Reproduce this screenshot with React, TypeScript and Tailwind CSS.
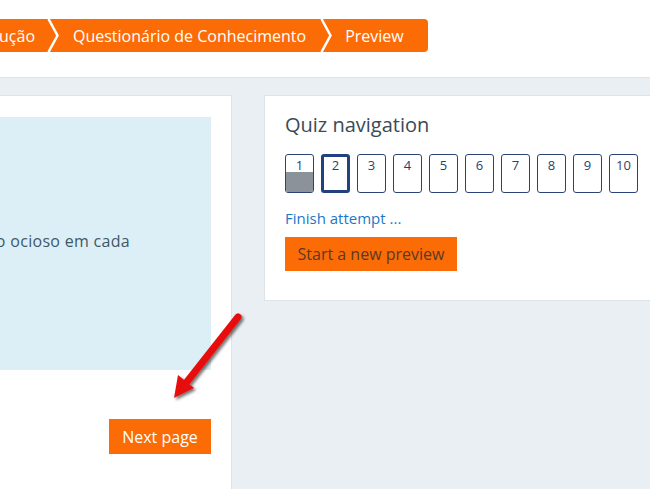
import React from 'react'

const font = { fontFamily: '"Open Sans", "Noto Sans", sans-serif' }

function Chevron() {
  return (
    <svg width="13" height="33" viewBox="0 0 13 33" className="shrink-0">
      <polyline points="1.5,0 10.5,16.5 1.5,33" fill="none" stroke="#fff" strokeWidth="2.5" />
    </svg>
  )
}

function NavButton({ n, current, answered }: { n: number; current?: boolean; answered?: boolean }) {
  return (
    <div
      className={`relative w-[29px] h-[39px] rounded-[3px] bg-white overflow-hidden flex justify-center ${
        current ? 'border-[3px] border-[#22417f]' : 'border border-[#2b4478]'
      }`}
    >
      {answered && <div className="absolute left-0 right-0 bottom-0 h-[20px] bg-[#8b9299]" />}
      <span className={`relative text-[13px] leading-none text-[#2b3f6e] ${current ? 'mt-[2px]' : 'mt-[4px]'}`}>{n}</span>
    </div>
  )
}

export default function App() {
  return (
    <div className="relative w-[650px] h-[489px] overflow-hidden bg-[#e9eff3]" style={font}>
      {/* Header with breadcrumb */}
      <div className="h-[78px] bg-white border-b border-[#dbe3e8] pt-[19px]">
        <div className="flex items-center h-[33px] w-[428px] bg-[#fb6b06] rounded-r-[4px] text-white text-[16px] whitespace-nowrap">
          <div className="w-[35px] flex justify-end">
            <span className="shrink-0">Execução</span>
          </div>
          <div className="ml-[12px] mr-[13px]"><Chevron /></div>
          <span>Questionário de Conhecimento</span>
          <div className="ml-[14px] mr-[12px]"><Chevron /></div>
          <span>Preview</span>
        </div>
      </div>

      {/* Main */}
      <div className="flex items-start gap-[32px] pt-[17px]">
        {/* Left card */}
        <div className="-ml-[40px] w-[272px] h-[420px] shrink-0 bg-white border border-[#dde4e9] pt-[21px] pr-[20px]">
          <div className="h-[253px] bg-[#ddeff6] pt-[112px]">
            <div className="w-[169px] flex justify-end whitespace-nowrap">
              <span className="shrink-0 text-[16px] tracking-[0.3px] text-[#3f5867]">tempo ocioso em cada</span>
            </div>
          </div>
          <div className="flex justify-end mt-[49px]">
            <button className="h-[35px] w-[102px] bg-[#fb6b06] text-white text-[16px]">Next page</button>
          </div>
        </div>

        {/* Right card */}
        <div className="w-[420px] shrink-0 bg-white border border-[#dde4e9] pl-[20px] pt-[14px] pb-[29px]">
          <h3 className="text-[20px] text-[#3b4a55] leading-[30px]">Quiz navigation</h3>
          <div className="flex gap-[7px] mt-[14px]">
            <NavButton n={1} answered />
            <NavButton n={2} current />
            {[3, 4, 5, 6, 7, 8, 9, 10].map(n => (
              <NavButton key={n} n={n} />
            ))}
          </div>
          <a className="block mt-[14px] text-[15px] text-[#1a78c8] leading-[22px]">Finish attempt ...</a>
          <button className="mt-[8px] h-[34px] w-[172px] bg-[#fb6b06] text-[16px] text-[#5a3a26]">Start a new preview</button>
        </div>
      </div>

      {/* Annotation arrow */}
      <svg className="absolute left-[160px] top-[305px]" width="100" height="105" viewBox="160 305 100 105">
        <defs>
          <filter id="sh" x="-50%" y="-50%" width="200%" height="200%">
            <feDropShadow dx="2" dy="2" stdDeviation="1.5" floodColor="#000" floodOpacity="0.55" />
          </filter>
        </defs>
        <g filter="url(#sh)">
          <line x1="238" y1="317" x2="186" y2="383" stroke="#e8100e" strokeWidth="7" strokeLinecap="round" />
          <polygon points="174,398 178,375 194,388" fill="#e8100e" />
        </g>
      </svg>
    </div>
  )
}
